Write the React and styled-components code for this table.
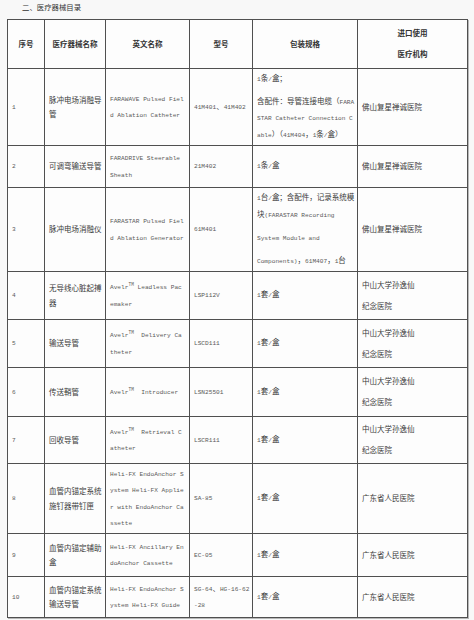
import React from "react";
import styled, { createGlobalStyle } from "styled-components";

const Global = createGlobalStyle`
  html, body { margin: 0; padding: 0; background: #f8f8f8; }
  body { font-family: "Noto Sans CJK SC", "Noto Sans", sans-serif; }
`;

const Page = styled.div`
  width: 474px;
  height: 620px;
  overflow: hidden;
  padding: 0 0 0 7px;
  box-sizing: border-box;
`;

const Title = styled.div`
  height: 13px;
  line-height: 13px;
  font-size: 7.4px;
  color: #333;
  padding-left: 15px;
  margin-bottom: 6px;
`;

const Table = styled.table`
  width: 460px;
  table-layout: fixed;
  border-collapse: collapse;
  background: #fdfdfd;
  box-shadow: 1px 1px 0 #b8b8b8;
`;

const Row = styled.tr`
  height: ${(p) => p.$h}px;
`;

const Th = styled.th`
  border: 1px solid #505050;
  padding: 0 3px;
  font-size: 7.5px;
  font-weight: 700;
  color: #333;
  text-align: center;
  vertical-align: middle;
`;

const Td = styled.td`
  border: 1px solid #505050;
  padding: 0 3px 0 4px;
  font-size: 7.5px;
  font-weight: 400;
  color: #3a3a3a;
  text-align: left;
  vertical-align: middle;
`;

const Para = styled.div`
  & + & {
    margin-top: 6.5px;
  }
`;

const Line = styled.div`
  line-height: 14.5px;
  white-space: nowrap;
`;

const Lat = styled.span`
  font-family: "Liberation Mono", "DejaVu Sans Mono", monospace;
  font-size: 6.15px;
  color: #5a5a5a;
  white-space: pre;
`;

const Sup = styled.sup`
  font-family: "Liberation Mono", monospace;
  font-size: 4.5px;
  line-height: 0;
  vertical-align: 3px;
  color: #5a5a5a;
`;

function renderText(str) {
  const out = [];
  const re = /(™)|([\x20-\x7e]+)|([^\x20-\x7e™]+)/g;
  let m;
  let k = 0;
  while ((m = re.exec(str))) {
    if (m[1]) out.push(<Sup key={k++}>TM</Sup>);
    else if (m[2]) out.push(<Lat key={k++}>{m[2]}</Lat>);
    else out.push(<React.Fragment key={k++}>{m[3]}</React.Fragment>);
  }
  return out;
}

function Cell({ paras, as }) {
  const C = as || Td;
  const list = typeof paras === "string" ? [[paras]] : Array.isArray(paras[0]) ? paras : [paras];
  return (
    <C>
      {list.map((p, i) => (
        <Para key={i}>
          {p.map((l, j) => (
            <Line key={j}>{renderText(l)}</Line>
          ))}
        </Para>
      ))}
    </C>
  );
}

const ZS = [["中山大学孙逸仙"], ["纪念医院"]];
const FS = "佛山复星禅诚医院";
const GD = "广东省人民医院";

const rows = [
  {
    h: 77,
    no: "1",
    name: ["脉冲电场消融导", "管"],
    en: ["FARAWAVE Pulsed Fiel", "d Ablation Catheter"],
    model: "41M401、41M402",
    pkg: [["1条/盒；"], ["含配件：导管连接电缆（FARA", "STAR Catheter Connection C", "able）（41M404，1条/盒）"]],
    inst: FS,
  },
  {
    h: 42,
    no: "2",
    name: "可调弯输送导管",
    en: ["FARADRIVE Steerable", "Sheath"],
    model: "21M402",
    pkg: "1条/盒",
    inst: FS,
  },
  {
    h: 84,
    no: "3",
    name: "脉冲电场消融仪",
    en: ["FARASTAR Pulsed Fiel", "d Ablation Generator"],
    model: "61M401",
    pkg: [["1台/盒；含配件，记录系统模", "块(FARASTAR Recording"], ["System Module and"], ["Components)，61M407，1台"]],
    inst: FS,
  },
  {
    h: 48,
    no: "4",
    name: ["无导线心脏起搏", "器"],
    en: ["Avelr™ Leadless Pac", "emaker"],
    model: "LSP112V",
    pkg: "1套/盒",
    inst: ZS,
  },
  {
    h: 48,
    no: "5",
    name: "输送导管",
    en: ["Avelr™  Delivery Ca", "theter"],
    model: "LSCD111",
    pkg: "1套/盒",
    inst: ZS,
  },
  {
    h: 49,
    no: "6",
    name: "传送鞘管",
    en: ["Avelr™  Introducer"],
    model: "LSN25501",
    pkg: "1套/盒",
    inst: ZS,
  },
  {
    h: 47,
    no: "7",
    name: "回收导管",
    en: ["Avelr™  Retrieval C", "atheter"],
    model: "LSCR111",
    pkg: "1套/盒",
    inst: ZS,
  },
  {
    h: 70,
    no: "8",
    name: ["血管内锚定系统", "施钉器带钉匣"],
    en: ["Heli-FX EndoAnchor S", "ystem Heli-FX Applie", "r with EndoAnchor Ca", "ssette"],
    model: "SA-85",
    pkg: "1套/盒",
    inst: GD,
  },
  {
    h: 43,
    no: "9",
    name: ["血管内锚定辅助", "盒"],
    en: ["Heli-FX Ancillary En", "doAnchor Cassette"],
    model: "EC-05",
    pkg: "1套/盒",
    inst: GD,
  },
  {
    h: 41,
    no: "10",
    name: ["血管内锚定系统", "输送导管"],
    en: ["Heli-FX EndoAnchor S", "ystem Heli-FX Guide"],
    model: ["SG-64、HG-16-62", "-28"],
    pkg: "1套/盒",
    inst: GD,
  },
];

const widths = [37, 61, 84, 63, 105, 110];

export default function App() {
  return (
    <Page>
      <Global />
      <Title>二、医疗器械目录</Title>
      <Table>
        <colgroup>
          {widths.map((w, i) => (
            <col key={i} style={{ width: w }} />
          ))}
        </colgroup>
        <thead>
          <Row $h={49}>
            <Cell as={Th} paras="序号" />
            <Cell as={Th} paras="医疗器械名称" />
            <Cell as={Th} paras="英文名称" />
            <Cell as={Th} paras="型号" />
            <Cell as={Th} paras="包装规格" />
            <Cell as={Th} paras={[["进口使用"], ["医疗机构"]]} />
          </Row>
        </thead>
        <tbody>
          {rows.map((r) => (
            <Row key={r.no} $h={r.h}>
              <Cell paras={r.no} />
              <Cell paras={r.name} />
              <Cell paras={r.en} />
              <Cell paras={r.model} />
              <Cell paras={r.pkg} />
              <Cell paras={r.inst} />
            </Row>
          ))}
        </tbody>
      </Table>
    </Page>
  );
}
